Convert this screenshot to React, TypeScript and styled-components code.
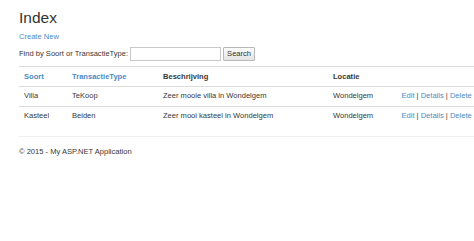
import React from "react";
import styled, { createGlobalStyle } from "styled-components";

const Global = createGlobalStyle`
  html, body { margin: 0; padding: 0; background: #fff; overflow: hidden; }
  body {
    font-family: "Liberation Sans", Arial, Helvetica, sans-serif;
    font-size: 7.55px;
    color: #383838;
  }
`;

const Page = styled.div`
  width: 470px;
  padding-left: 19px;
  box-sizing: border-box;
`;

const Title = styled.h2`
  margin: 0;
  padding-top: 9px;
  font-size: 15.5px;
  line-height: 17px;
  font-weight: 400;
  color: #333;
`;

const Link = styled.a`
  color: #4a8cc6;
  text-decoration: none;
  cursor: pointer;
`;

const LinkLine = styled.p`
  margin: 5.7px 0 0 0;
  line-height: 10px;
`;

const SearchForm = styled.form`
  display: flex;
  align-items: center;
  height: 14px;
  margin-top: 5.3px;
`;

const Label = styled.span`
  line-height: 10px;
  margin-right: 2px;
`;

const TextInput = styled.input`
  box-sizing: border-box;
  width: 91px;
  height: 14px;
  border: 1px solid #c8c8c8;
  padding: 0 2px;
  margin: 0;
  font: inherit;
  background: #fff;
  outline: none;
`;

const Button = styled.button`
  box-sizing: border-box;
  width: 32px;
  height: 14px;
  margin: 0 0 0 2px;
  padding: 0;
  font-family: inherit;
  font-size: 7.55px;
  color: #333;
  border: 1px solid #b8b8b8;
  border-radius: 1px;
  background: linear-gradient(#fbfbfb, #e4e4e4);
`;

const Table = styled.table`
  width: 460px;
  margin-top: 5.5px;
  margin-bottom: 10.5px;
  border-collapse: collapse;
  table-layout: fixed;
`;

const Th = styled.th`
  text-align: left;
  font-weight: 700;
  padding: 4.2px 5px;
  line-height: 10.4px;
  border-top: 1px solid #ddd;
  border-bottom: 1px solid #ddd;
  white-space: nowrap;
`;

const Td = styled.td`
  padding: 4.2px 5px;
  line-height: 10.4px;
  border-top: 1px solid #ddd;
  white-space: nowrap;
`;

const ActionsCell = styled(Td)`
  padding-left: 3.5px;
`;

const Rule = styled.hr`
  margin: 0 0 10px 0;
  border: 0;
  border-top: 1px solid #eee;
  width: 460px;
`;

const Footer = styled.footer`
  line-height: 10.4px;
`;

const FooterText = styled.p`
  margin: 0;
`;

const rows = [
  { soort: "Villa", type: "TeKoop", besch: "Zeer mooie villa in Wondelgem", loc: "Wondelgem" },
  { soort: "Kasteel", type: "Beiden", besch: "Zeer mooi kasteel in Wondelgem", loc: "Wondelgem" },
];

export default function App() {
  return (
    <Page>
      <Global />
      <Title>Index</Title>
      <LinkLine>
        <Link>Create New</Link>
      </LinkLine>
      <SearchForm onSubmit={(e) => e.preventDefault()}>
        <Label>Find by Soort or TransactieType:</Label>
        <TextInput type="text" />
        <Button type="submit">Search</Button>
      </SearchForm>
      <Table>
        <colgroup>
          <col style={{ width: 48 }} />
          <col style={{ width: 91 }} />
          <col style={{ width: 170 }} />
          <col style={{ width: 70 }} />
          <col style={{ width: 81 }} />
        </colgroup>
        <tbody>
          <tr>
            <Th>
              <Link>Soort</Link>
            </Th>
            <Th>
              <Link>TransactieType</Link>
            </Th>
            <Th>Beschrijving</Th>
            <Th>Locatie</Th>
            <Th></Th>
          </tr>
          {rows.map((r) => (
            <tr key={r.soort}>
              <Td>{r.soort}</Td>
              <Td>{r.type}</Td>
              <Td>{r.besch}</Td>
              <Td>{r.loc}</Td>
              <ActionsCell>
                <Link>Edit</Link> | <Link>Details</Link> | <Link>Delete</Link>
              </ActionsCell>
            </tr>
          ))}
        </tbody>
      </Table>
      <Rule />
      <Footer>
        <FooterText>© 2015 - My ASP.NET Application</FooterText>
      </Footer>
    </Page>
  );
}
